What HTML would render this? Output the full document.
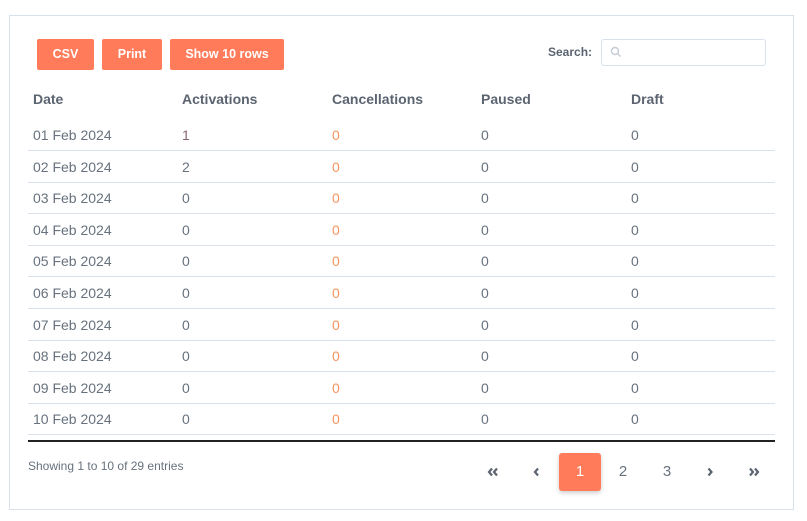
<!DOCTYPE html>
<html><head><style>
body{margin:0;width:807px;height:521px;background:#fff;font-family:"Liberation Sans",sans-serif;position:relative;overflow:hidden}
.card{position:absolute;left:9px;top:15px;width:785px;height:495px;border:1px solid #d8e1ec;box-sizing:border-box}
.btn{position:absolute;top:39px;height:31px;background:#ff7b5a;color:#fff;font-weight:bold;font-size:12.5px;line-height:30px;text-align:center;border-radius:2px}
.t{position:absolute;font-size:14px;color:#67727e}
.h{position:absolute;font-size:14px;font-weight:bold;color:#5b6470;top:91px}
.line{position:absolute;left:28px;width:747px;height:1px;background:#d8e1ec}
.p{position:absolute;top:453px;width:42px;height:38px;line-height:38px;text-align:center;font-size:15px;color:#67727e}
.p svg{position:absolute;left:15px;top:13px}
</style></head><body>
<div class="card"></div>
<div class="btn" style="left:37px;width:57px">CSV</div>
<div class="btn" style="left:102px;width:60px">Print</div>
<div class="btn" style="left:170px;width:114px">Show 10 rows</div>
<div style="position:absolute;left:548px;top:45px;font-size:12px;font-weight:bold;color:#5b6470">Search:</div>
<div style="position:absolute;left:601px;top:39px;width:165px;height:27px;border:1px solid #d8e1ec;border-radius:3px;box-sizing:border-box">
<svg width="12" height="12" style="position:absolute;left:8px;top:6px" viewBox="0 0 12 12"><circle cx="5" cy="5" r="3.5" fill="none" stroke="#c5ccd5" stroke-width="1.4"/><path d="M7.5 7.5L10.5 10.5" stroke="#c5ccd5" stroke-width="1.5"/></svg></div>
<div class="h" style="left:33px">Date</div>
<div class="h" style="left:182px">Activations</div>
<div class="h" style="left:332px">Cancellations</div>
<div class="h" style="left:481px">Paused</div>
<div class="h" style="left:631px">Draft</div>
<div id="rows"></div>
<script>
var h='';for(var i=0;i<10;i++){var y=127+i*31.6;var d=(i+1<10?'0':'')+(i+1)+' Feb 2024';var a=i==0?'1':i==1?'2':'0';
h+='<div class="t" style="left:33px;top:'+y+'px">'+d+'</div><div class="t" style="left:182px;top:'+y+'px'+(i==0?';color:#8a6670':'')+'">'+a+'</div><div class="t" style="left:332px;top:'+y+'px;color:#f5945f">0</div><div class="t" style="left:481px;top:'+y+'px">0</div><div class="t" style="left:631px;top:'+y+'px">0</div>';
h+='<div class="line" style="top:'+(150+i*31.6)+'px"></div>';}
document.getElementById('rows').innerHTML=h;
</script>
<div style="position:absolute;left:28px;top:440px;width:747px;height:2px;background:#222"></div>
<div style="position:absolute;left:28px;top:459px;font-size:12px;color:#67727e">Showing 1 to 10 of 29 entries</div>
<div class="p" style="left:472px"><svg width="12" height="12" viewBox="0 0 12 12"><path d="M5 2.5L2 6L5 9.5M10 2.5L7 6L10 9.5" fill="none" stroke="#5b6470" stroke-width="2.2"/></svg></div>
<div class="p" style="left:515px"><svg width="12" height="12" viewBox="0 0 12 12"><path d="M8 2.5L5 6L8 9.5" fill="none" stroke="#5b6470" stroke-width="2.2"/></svg></div>
<div class="p" style="left:559px;background:#ff7b5a;color:#fff;border-radius:3px;box-shadow:0 2px 5px rgba(0,0,0,.2)">1</div>
<div class="p" style="left:602px">2</div>
<div class="p" style="left:646px">3</div>
<div class="p" style="left:689px"><svg width="12" height="12" viewBox="0 0 12 12"><path d="M4.5 2.5L7.5 6L4.5 9.5" fill="none" stroke="#5b6470" stroke-width="2.2"/></svg></div>
<div class="p" style="left:733px"><svg width="12" height="12" viewBox="0 0 12 12"><path d="M2 2.5L5 6L2 9.5M7 2.5L10 6L7 9.5" fill="none" stroke="#5b6470" stroke-width="2.2"/></svg></div>
</body></html>
